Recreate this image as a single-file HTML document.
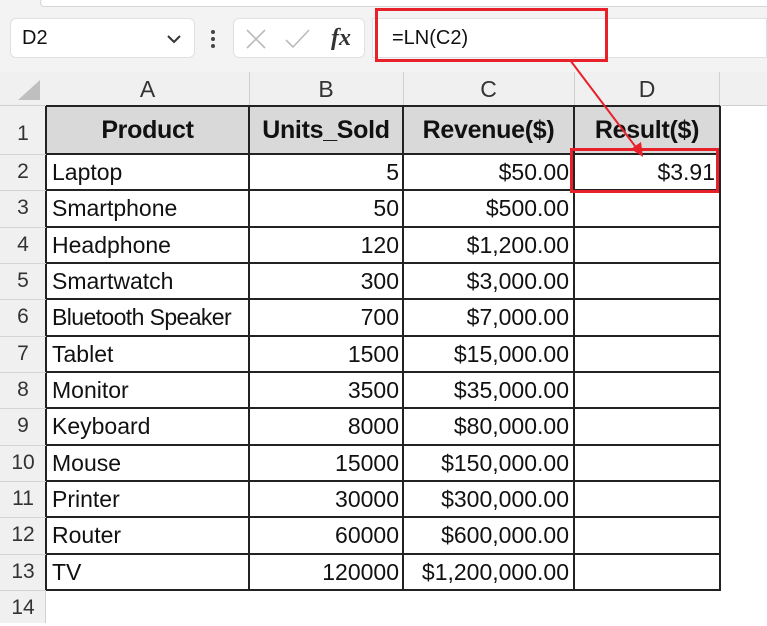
<!DOCTYPE html>
<html><head><style>
body{margin:0;width:767px;height:623px;overflow:hidden;background:#fff;font-family:"Liberation Sans",sans-serif;position:relative}
.a{position:absolute;box-sizing:border-box}
.t{position:absolute;font-size:23px;color:#111;white-space:nowrap;line-height:36px}
</style></head><body>
<div class="a" style="left:0;top:0;width:767px;height:72px;background:#f3f3f3"></div>
<div class="a" style="left:40px;top:-2px;width:740px;height:9px;background:#fff;border:1px solid #d6d6d6;border-radius:4px"></div>
<div class="a" style="left:10px;top:18px;width:185px;height:40px;background:#fff;border:1px solid #e0e0e0;border-radius:6px"></div>
<div class="t" style="left:22px;top:20px;font-size:20px">D2</div>
<svg class="a" style="left:166px;top:33px" width="16" height="12"><path d="M2 3 L8 9 L14 3" stroke="#333" stroke-width="2" fill="none"/></svg>
<div class="a" style="left:211px;top:30px;width:4px;height:4px;background:#444;border-radius:2px"></div>
<div class="a" style="left:211px;top:37px;width:4px;height:4px;background:#444;border-radius:2px"></div>
<div class="a" style="left:211px;top:44px;width:4px;height:4px;background:#444;border-radius:2px"></div>
<div class="a" style="left:233px;top:18px;width:132px;height:40px;background:#fff;border:1px solid #e0e0e0;border-radius:6px"></div>
<svg class="a" style="left:244px;top:27px" width="100" height="24"><path d="M3 3 L21 21 M21 3 L3 21" stroke="#bbb" stroke-width="1.6"/><path d="M42 13 L49 20 L65 3" stroke="#bbb" stroke-width="1.6" fill="none"/></svg>
<div class="t" style="left:331px;top:20px;font-family:'Liberation Serif',serif;font-style:italic;font-weight:bold;font-size:24px;color:#333">fx</div>
<div class="a" style="left:372px;top:18px;width:395px;height:40px;background:#fff;border:1px solid #e0e0e0"></div>
<div class="t" style="left:392px;top:20px;font-size:20px">=LN(C2)</div>
<div class="a" style="left:375px;top:8px;width:233px;height:54px;border:3px solid #e8202a"></div>
<div class="a" style="left:0;top:72px;width:767px;height:34px;background:#f0f0f0;border-bottom:1px solid #d0d0d0"></div>
<div class="a" style="left:0;top:106px;width:46px;height:517px;background:#f0f0f0;border-right:1px solid #d0d0d0"></div>
<svg class="a" style="left:14px;top:78px" width="28" height="24"><path d="M26 2 L26 22 L4 22 Z" fill="#bfbfbf"/></svg>
<div class="a" style="left:249px;top:72px;width:1px;height:34px;background:#d0d0d0"></div>
<div class="a" style="left:403px;top:72px;width:1px;height:34px;background:#d0d0d0"></div>
<div class="a" style="left:574px;top:72px;width:1px;height:34px;background:#d0d0d0"></div>
<div class="a" style="left:719px;top:72px;width:1px;height:34px;background:#d0d0d0"></div>
<div class="t" style="left:46px;width:203px;text-align:center;top:72px;line-height:34px;color:#333">A</div>
<div class="t" style="left:249px;width:154px;text-align:center;top:72px;line-height:34px;color:#333">B</div>
<div class="t" style="left:403px;width:171px;text-align:center;top:72px;line-height:34px;color:#333">C</div>
<div class="t" style="left:574px;width:146px;text-align:center;top:72px;line-height:34px;color:#333">D</div>
<div id="g"></div>
<script>
var cols=[46,249,403,574,720];
var rows=[106,154];for(var i=1;i<=12;i++)rows.push(Math.round(154+i*36.33));
var data=[["Laptop",5,"$50.00","$3.91"],["Smartphone",50,"$500.00"],["Headphone",120,"$1,200.00"],["Smartwatch",300,"$3,000.00"],["Bluetooth Speaker",700,"$7,000.00"],["Tablet",1500,"$15,000.00"],["Monitor",3500,"$35,000.00"],["Keyboard",8000,"$80,000.00"],["Mouse",15000,"$150,000.00"],["Printer",30000,"$300,000.00"],["Router",60000,"$600,000.00"],["TV",120000,"$1,200,000.00"]];
var h='<div class="a" style="left:46px;top:106px;width:674px;height:48px;background:#d9d9d9"></div>';
var hd=["Product","Units_Sold","Revenue($)","Result($)"];
for(var c=0;c<4;c++)h+='<div class="t" style="left:'+cols[c]+'px;width:'+(cols[c+1]-cols[c])+'px;text-align:center;top:108px;line-height:44px;font-weight:bold;font-size:25px;letter-spacing:-0.3px">'+hd[c]+'</div>';
for(var r=0;r<rows.length;r++)h+='<div class="a" style="left:46px;top:'+(rows[r]-1)+'px;width:674px;height:2px;background:#222"></div>';
for(var c=0;c<5;c++)h+='<div class="a" style="left:'+(cols[c]-1)+'px;top:106px;width:2px;height:'+(rows[13]-106+1)+'px;background:#222"></div>';
var rn=[[106,154,1]];for(var i=0;i<13;i++)rn.push([rows[i+1],i<12?rows[i+2]:623,i+2]);
for(var i=0;i<rn.length;i++){h+='<div class="t" style="left:0;width:46px;text-align:center;top:'+(rn[i][0]+(i==0?6:0))+'px;line-height:'+(i==0?44:36)+'px;color:#333;font-size:21px">'+rn[i][2]+'</div>';
 if(i>0)h+='<div class="a" style="left:0;top:'+rn[i][0]+'px;width:46px;height:1px;background:#d4d4d4"></div>';}
for(var i=0;i<12;i++){var y=rows[i+1];var d=data[i];
h+='<div class="t" style="left:52px;top:'+y+'px;'+(i==4?'letter-spacing:-0.6px':'')+'">'+d[0]+'</div>';
h+='<div class="t" style="left:249px;width:150px;text-align:right;top:'+y+'px">'+d[1]+'</div>';
h+='<div class="t" style="left:403px;width:166px;text-align:right;top:'+y+'px">'+d[2]+'</div>';
if(d[3])h+='<div class="t" style="left:574px;width:141px;text-align:right;top:'+y+'px">'+d[3]+'</div>';}
document.getElementById('g').innerHTML=h;
</script>
<div class="a" style="left:570px;top:148px;width:149px;height:45px;border:3px solid #e8202a"></div>
<svg class="a" style="left:0;top:0" width="767" height="623"><line x1="570" y1="60" x2="638" y2="150" stroke="#e8202a" stroke-width="2"/><path d="M643 157 L631 149 L641 142 Z" fill="#e8202a"/></svg>
</body></html>
